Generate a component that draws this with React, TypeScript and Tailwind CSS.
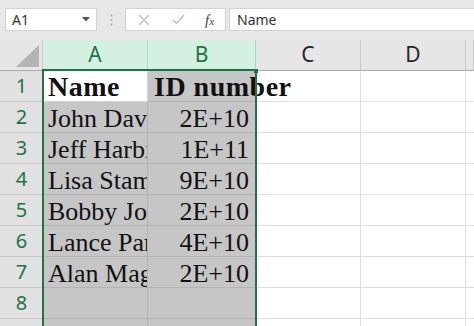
import React from 'react';

const rows = [
  { n: 1, a: 'Name', b: 'ID number', head: true },
  { n: 2, a: 'John Davidson', b: '2E+10' },
  { n: 3, a: 'Jeff Harbison', b: '1E+11' },
  { n: 4, a: 'Lisa Stamford', b: '9E+10' },
  { n: 5, a: 'Bobby Johnson', b: '2E+10' },
  { n: 6, a: 'Lance Parker', b: '4E+10' },
  { n: 7, a: 'Alan Magee', b: '2E+10' },
  { n: 8, a: '', b: '' },
  { n: 9, a: '', b: '' },
];

const uiFont = { fontFamily: '"Noto Sans", "Open Sans", sans-serif' };
const cellFont = { fontFamily: '"Liberation Serif", serif' };

function Toolbar() {
  return (
    <div className="h-[40px] bg-[#e8e8e8] flex items-start pt-[8px] pl-[5px]" style={uiFont}>
      {/* Name box */}
      <div className="w-[92px] h-[23px] bg-white border border-[#d2d2d2] flex items-center justify-between pl-[6px] pr-[6px]">
        <span className="text-[14px] text-[#333]">A1</span>
        <svg width="8" height="5" viewBox="0 0 8 5">
          <path d="M0 0 L8 0 L4 4.5 Z" fill="#555" />
        </svg>
      </div>

      {/* grip dots */}
      <div className="w-[28px] h-[23px] flex items-center justify-center">
        <svg width="3" height="12" viewBox="0 0 3 12">
          <circle cx="1.5" cy="1.5" r="1" fill="#a8a8a8" />
          <circle cx="1.5" cy="6" r="1" fill="#a8a8a8" />
          <circle cx="1.5" cy="10.5" r="1" fill="#a8a8a8" />
        </svg>
      </div>

      {/* cancel / enter / fx */}
      <div className="w-[101px] h-[23px] bg-white border border-[#d2d2d2] flex items-center pl-[12px]">
        <svg width="12" height="12" viewBox="0 0 12 12" fill="none" stroke="#bdbdbd" strokeWidth="1.3">
          <line x1="1" y1="1" x2="11" y2="11" />
          <line x1="11" y1="1" x2="1" y2="11" />
        </svg>
        <svg className="ml-[22px]" width="13" height="11" viewBox="0 0 13 11" fill="none" stroke="#bdbdbd" strokeWidth="1.4">
          <polyline points="1,6 4.5,9.5 12,1" />
        </svg>
        <span className="ml-[20px] text-[#444] italic leading-none" style={{ fontFamily: '"Liberation Serif", serif' }}>
          <span className="text-[15px]">f</span>
          <span className="text-[11px]">x</span>
        </span>
      </div>

      {/* formula bar */}
      <div className="ml-[3px] flex-1 h-[23px] bg-white border border-[#d2d2d2] border-r-0 flex items-center pl-[7px]">
        <span className="text-[14px] text-[#333]">Name</span>
      </div>
    </div>
  );
}

function ColHeader({ label, selected }: { label: string; selected?: boolean }) {
  return (
    <div
      className={
        selected
          ? 'bg-[#d3f0e0] border-r border-[#aad7bd] border-b-2 border-b-[#217346] flex items-center justify-center text-[21px] text-[#217346]'
          : 'bg-[#e6e6e6] border-r border-[#c9c9c9] border-b border-b-[#ababab] flex items-center justify-center text-[21px] text-[#262626]'
      }
      style={uiFont}
    >
      {label}
    </div>
  );
}

export default function App() {
  return (
    <div className="w-[474px] h-[326px] overflow-hidden bg-white">
      <Toolbar />

      <div className="relative grid grid-cols-[43px_105px_108px_105px_105px_1fr] auto-rows-[31px]">
        {/* select all corner */}
        <div className="bg-[#e6e6e6] border-r border-[#c9c9c9] border-b border-b-[#ababab] flex items-end justify-end pr-[3px] pb-[3px]">
          <svg width="23" height="22" viewBox="0 0 23 22">
            <path d="M23 0 L23 22 L0 22 Z" fill="#b4b4b4" />
          </svg>
        </div>
        <ColHeader label="A" selected />
        <ColHeader label="B" selected />
        <ColHeader label="C" />
        <ColHeader label="D" />
        <ColHeader label="" />

        {rows.map((r) => (
          <React.Fragment key={r.n}>
            <div
              className="bg-[#e1e1e1] border-b border-[#c6c6c6] flex items-center justify-center text-[20px] text-[#217346]"
              style={uiFont}
            >
              {r.n}
            </div>
            <div
              className={
                (r.n === 1 ? 'bg-white border-[#d4d4d4] ' : 'bg-[#c6c6c6] border-[#b3b3b3] ') +
                'border-r border-b overflow-hidden whitespace-nowrap flex items-end pl-[5px] text-[#111]'
              }
              style={cellFont}
            >
              <span className={r.head ? 'text-[28px] leading-[0.95] font-bold tracking-[0.5px]' : 'text-[26px] leading-[0.95]'}>
                {r.a}
              </span>
            </div>
            <div
              className={
                'relative z-[1] bg-[#c6c6c6] border-r border-b border-[#b3b3b3] whitespace-nowrap flex items-end text-[#111] ' +
                (r.head ? 'justify-start pl-[6px]' : 'justify-end pr-[6px]')
              }
              style={cellFont}
            >
              <span className={r.head ? 'text-[28px] leading-[0.95] font-bold tracking-[0.5px]' : 'text-[26px] leading-[0.95]'}>
                {r.b}
              </span>
            </div>
            <div className="border-r border-b border-[#dedede]" />
            <div className="border-r border-b border-[#dedede]" />
            <div className="border-b border-[#dedede]" />
          </React.Fragment>
        ))}

        {/* selection: columns A:B */}
        <div className="absolute z-[2] left-[42px] top-[29px] w-[215px] h-[320px] border-2 border-[#217346] pointer-events-none">
          <div className="absolute -right-[3px] -top-[2px] w-[4px] h-[4px] bg-[#217346]" />
        </div>
      </div>
    </div>
  );
}
